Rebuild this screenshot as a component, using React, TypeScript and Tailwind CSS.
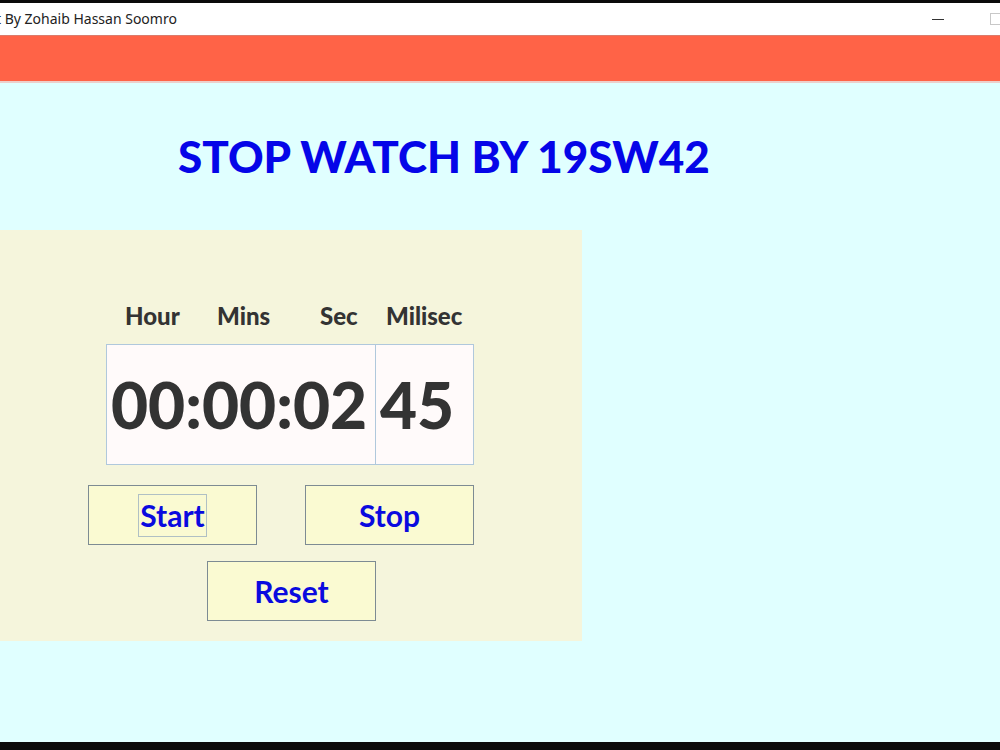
import { useEffect, useState } from "react";

const display = "font-[Jokerman,Lato,sans-serif]";
const actionButton =
  "flex h-[60px] w-[169px] items-center justify-center border border-[#7d8b93] bg-[#fafad2] text-[30px] leading-8 font-bold text-[#0a0adf]";

function pad(value: number) {
  return String(value).padStart(2, "0");
}

export default function App() {
  const [running, setRunning] = useState(false);
  const [ticks, setTicks] = useState(245);

  useEffect(() => {
    if (!running) return;
    const timer = setInterval(() => setTicks((t) => t + 1), 10);
    return () => clearInterval(timer);
  }, [running]);

  const seconds = Math.floor(ticks / 100);
  const clock = [Math.floor(seconds / 3600), Math.floor(seconds / 60) % 60, seconds % 60].map(pad).join(":");

  return (
    <div className="flex min-h-screen flex-col overflow-hidden border-t-[3px] border-b-8 border-[#0a0a0a] bg-[#e0ffff]">
      <header className="flex h-8 items-center justify-between overflow-hidden bg-white">
        <span className="-ml-1 font-['Noto_Sans','Open_Sans',sans-serif] text-[14px] leading-5 whitespace-pre text-[#222222]">
          t By Zohaib Hassan Soomro
        </span>
        <div className="-mr-2 flex items-center gap-11">
          <button type="button" aria-label="Minimize" className="flex h-5 w-4 items-center justify-center">
            <span className="h-px w-3 bg-[#333333]" />
          </button>
          <button type="button" aria-label="Maximize" className="h-3 w-[18px] border border-[#c8c8c8]" />
        </div>
      </header>
      <div className="h-12 border-t border-b-2 border-t-[#dc7b6b] border-b-[#edcfcb] bg-[#ff6347]" />

      <main className={`flex-1 pt-[45px] ${display}`}>
        <h1 className="pl-[178px] text-[44px] leading-[56px] font-black whitespace-nowrap text-[#0505e8]">
          STOP WATCH BY 19SW42
        </h1>

        <section className="mt-[46px] w-[582px] bg-[#f5f5dc] pt-[70px] pb-5">
          <div className="flex pl-[125px] text-[24px] leading-8 font-black text-[#333333]">
            <span className="w-[92px]">Hour</span>
            <span className="w-[103px]">Mins</span>
            <span className="w-[66px]">Sec</span>
            <label htmlFor="hundredths">Milisec</label>
          </div>

          <div className="mt-3 ml-[106px] flex h-[121px] w-[368px] border border-[#b0c8dc] bg-[#fffafa] text-[64px] leading-[76px] font-black text-[#333333]">
            <input
              aria-label="Hours, minutes and seconds"
              readOnly
              value={clock}
              className="w-[269px] border-r border-[#b0c8dc] pl-1 outline-none"
            />
            <input id="hundredths" readOnly value={pad(ticks % 100)} className="min-w-0 flex-1 pl-1 outline-none" />
          </div>

          <div className="mt-5 ml-[88px] flex gap-12">
            <button type="button" onClick={() => setRunning(true)} className={actionButton}>
              <span className="flex h-[43px] items-center border border-[#b0c0c4] px-px">Start</span>
            </button>
            <button type="button" onClick={() => setRunning(false)} className={actionButton}>
              Stop
            </button>
          </div>
          <div className="mt-4 ml-[207px]">
            <button
              type="button"
              onClick={() => {
                setRunning(false);
                setTicks(0);
              }}
              className={actionButton}
            >
              Reset
            </button>
          </div>
        </section>
      </main>
    </div>
  );
}
